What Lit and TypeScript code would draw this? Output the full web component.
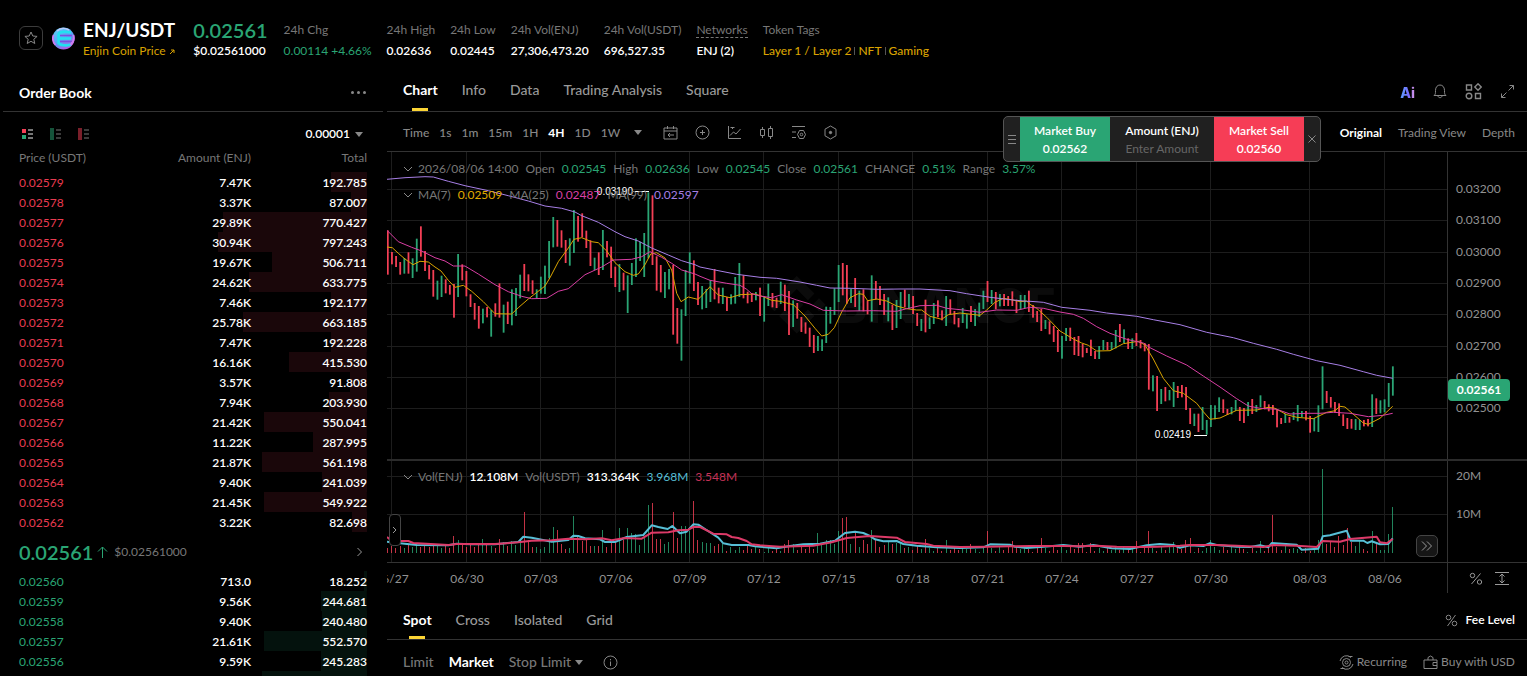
import { LitElement, html, css, svg } from "lit";
import { customElement, state } from "lit/decorators.js";
import { classMap } from "lit/directives/class-map.js";

/* ---------- market data ---------- */

interface Level { price: string; amount: string; total: number; }

const level = (row: string): Level => {
  const [price, amount, total] = row.split(" ");
  return { price, amount, total: Number(total) };
};

const ASKS = [
  "0.02579 7.47K 192.785", "0.02578 3.37K 87.007", "0.02577 29.89K 770.427", "0.02576 30.94K 797.243",
  "0.02575 19.67K 506.711", "0.02574 24.62K 633.775", "0.02573 7.46K 192.177", "0.02572 25.78K 663.185",
  "0.02571 7.47K 192.228", "0.02570 16.16K 415.530", "0.02569 3.57K 91.808", "0.02568 7.94K 203.930",
  "0.02567 21.42K 550.041", "0.02566 11.22K 287.995", "0.02565 21.87K 561.198", "0.02564 9.40K 241.039",
  "0.02563 21.45K 549.922", "0.02562 3.22K 82.698",
].map(level);

const BIDS = [
  "0.02560 713.0 18.252", "0.02559 9.56K 244.681", "0.02558 9.40K 240.480", "0.02557 21.61K 552.570",
  "0.02556 9.59K 245.283", "0.02555 21.98K 561.589",
].map(level);

const DEPTH_FULL = 1862;

/* Candle ranges, in thirds of a pixel below each block's base; r = down, g = up. */
const BLOCKS: [number, string][] = [
  [0, `r241-374 r306-343 r318-351 r336-374 g324-371 r307-371 g325-384 g266-365 r229-320 r303-363 r345-388 r360-440
   g392-449 g377-441 r388-430 r405-434 r402-503 g312-441 r343-391 r363-439 r433-471 r459-509 r468-536 g476-520
   r471-502 g480-560 r460-500 r400-503 g464-548 r455-522 g418-526 g414-498 g374-445 r342-423 r373-424 r391-432
   g418-446 g380-431 g347-432 g273-385 g201-292 r210-290 r241-293 r270-339 g265-347 g180-309 r198-275 r190-262
   r242-294 r271-348 g323-360 r307-375 g240-360 r273-322 r290-384 r350-411 g342-426 r368-421 g376-489 g339-405
   g265-381 g275-333 g249-381 g127-325 r136-345 r319-422 r345-427 g366-444 g357-418 r345-554 r474-581 g478-632
   g360-498 g307-401 r331-423 r396-465`],
  [240, `g168-238 g177-234 g151-216 r117-208 r173-220 g173-222 r201-243 g193-223 g141-221 g99-201 r136-205 r185-220
   r189-216 g186-211 r173-258 g199-275 g161-228 r189-232 r203-234 g155-222 r164-243 r183-315 g211-291 r219-266
   r261-306 r277-311 r293-351 r315-369 g318-363 g328-363 g230-339 g231-281 g175-255 g105-216 r99-196 r105-221
   g177-219 r144-231 g182-243 r178-244 r211-253 g136-275 r153-209 r168-225 r192-255 g202-274 r224-300 g210-294
   g186-267 r179-232 g192-237 r198-252 r249-288 g267-303 r209-307 g262-297 g219-282 r211-262 r241-271 g198-288
   r208-253 r243-283 r264-292 g234-279 g252-296 r228-276 g237-288 g218-261 g182-237 r153-216 g180-222 r186-238
   g192-229 r192-228 r198-228 r184-228 r209-249 g195-238 g195-234 r182-246`],
  [360, `r105-143 r123-156 r117-183 g150-177 r154-193 r168-216 r180-246 g198-266 g174-213 r173-213 r201-255 r198-258
   r222-262 r234-249 r209-258 r243-267 g228-267 g210-240 r216-240 g216-240 g180-235 r162-216 g178-219 r205-237
   g205-237 r189-228 r210-235 r219-244 r222-359 g316-364 r318-423 g357-402 r351-394 g360-391 g336-411 r348-384
   r345-382 r351-420 r414-462 g431-468 r431-486 g411-480 g450-494 g405-471 g406-448 g382-426 r388-429 r417-435
   g411-433 g390-423 r411-453 r414-459 g396-438 r387-432 g405-426 g376-412 r393-418 r403-424 r405-435 r417-472
   r444-462 g432-459 r441-458 g426-450 g405-454 g423-441 r423-451 r438-488 g444-484 g406-486 g289-418 r363-399
   r381-413 r396-427 r400-438 r433-468 r444-477 r447-476 g447-480 g450-480 r450-469 r447-469 g373-471 r385-432
   g391-430 g388-427 g339-411 g289-377`],
];

const STEP = 4.136;
const candles = BLOCKS.flatMap(([base, text]) =>
  text.trim().split(/\s+/).map((c) => {
    const [top, bottom] = c.slice(1).split("-").map((n) => (Number(n) + base) / 3 - 2);
    return { up: c[0] === "g", top, bottom };
  })
).map((c, i) => ({ ...c, x: 0.8 + i * STEP }));

/* Volume spikes by candle index, in thirds of a pixel; the rest is background trading. */
const SPIKES: Record<number, number> = {
  16: 50, 17: 40, 23: 42, 27: 41, 28: 34, 30: 36, 32: 43, 33: 122, 34: 40, 35: 18, 36: 17, 37: 12, 38: 18, 39: 44,
  40: 78, 41: 69, 42: 28, 43: 12, 44: 15, 45: 111, 46: 50, 47: 36, 48: 40, 49: 20, 50: 20, 51: 22, 52: 69, 53: 18,
  54: 30, 55: 33, 56: 74, 57: 40, 58: 76, 59: 60, 60: 58, 61: 24, 62: 45, 63: 145, 64: 149, 65: 42, 66: 42, 67: 26,
  68: 34, 69: 122, 70: 46, 71: 82, 72: 80, 73: 66, 74: 155, 75: 40, 76: 33, 77: 30, 78: 30, 79: 20, 80: 27, 81: 28,
  96: 28, 97: 38, 98: 26, 100: 28, 104: 59, 105: 28, 106: 38, 107: 38, 108: 28, 109: 67, 110: 105, 111: 109, 112: 27,
  113: 60, 114: 18, 115: 38, 116: 28, 117: 70, 118: 42, 119: 18, 120: 24, 121: 34, 122: 26, 123: 30, 124: 28, 125: 15,
  126: 17, 127: 8, 130: 42, 135: 39, 141: 26, 145: 65, 151: 35, 158: 44, 167: 29, 168: 29, 170: 30, 181: 36, 184: 66,
  190: 32, 193: 39, 194: 45, 199: 38, 211: 36, 214: 113, 219: 14, 225: 38, 226: 251, 227: 27, 228: 36, 229: 18,
  230: 51, 231: 24, 232: 75, 233: 33, 234: 22, 235: 35, 236: 12, 237: 6, 238: 66, 239: 30, 240: 8, 241: 9, 242: 57,
  243: 139,
};
const volumeOf = (i: number) =>
  (SPIKES[i] ?? (i < 32 ? 14 + ((i * 7) % 13) : 4 + ((i * 7) % 13) * 1.5)) / 3;

/* Line series: [x base, y base, points] in thirds of a pixel. */
type Series = [number, number, string][];
const line = (parts: Series, shift: number) =>
  parts.flatMap(([bx, by, pts]) =>
    pts.trim().split(/\s+/).map((p) => {
      const [x, y] = p.split(",").map(Number);
      return `${((x + bx) / 3 - 2).toFixed(1)},${((y + by) / 3 + shift).toFixed(1)}`;
    })
  ).join(" ");

const MA99 = line([
  [0, 0, "6,88 60,83 120,80 145,81 190,94 240,107 310,122 370,137 430,153 480,168 530,175 570,186 590,197 640,217 690,245 720,260 760,273 800,294 850,315 890,332 930,344"],
  [945, 240, "0,111 40,119 110,133 180,142 230,145 300,156 350,166 390,174 450,175 530,178 600,177 660,177 750,182 800,191 870,202 930,209 980,214"],
  [1935, 360, "0,94 40,97 95,112 180,121 230,129 320,139 370,149 450,164 530,187 610,203 670,220 740,238 790,253 860,272 930,286 1000,305 1040,316 1088,325"],
], -2);
const MA25 = line([
  [0, 0, "6,241 40,275 80,292 110,303 150,323 180,333 205,348 240,348 280,372 330,404 370,425 410,439 440,446 485,445 520,424 550,416 600,374 650,351 685,330 740,328 770,320 795,305 830,322 860,340 890,360 930,372"],
  [945, 240, "0,139 30,151 80,160 120,166 140,178 155,191 180,198 215,203 245,194 290,210 330,222 370,241 440,243 520,242 590,244 620,236 660,227 710,226 740,235 790,240 840,247 890,240 950,241 980,234"],
  [1935, 360, "0,112 40,115 90,126 130,133 160,145 200,170 240,190 290,208 340,219 360,233 410,258 470,285 520,318 570,351 620,386 655,408 690,415 740,418 780,432 830,430 870,430 910,427 960,430 1015,440 1060,436 1088,430"],
], -2);
const MA7 = line([
  [0, 0, "6,291 22,293 40,310 60,327 84,344 105,334 130,336 150,351 168,363 190,391 210,412 235,406 260,424 295,455 330,491 380,492 400,473 430,447 480,408 495,383 520,335 550,294 567,268 590,263 620,275 640,278 665,303 690,338 720,365 745,376 760,372 780,344 797,312 815,308 840,324 860,360 875,430 888,455 910,441 938,448"],
  [945, 240, "0,203 30,170 55,195 90,203 120,194 165,192 190,200 215,211 240,214 280,224 315,258 345,295 365,318 385,313 403,293 425,246 450,203 475,191 490,193 503,212 530,207 560,213 590,228 620,236 650,240 665,240 690,259 725,268 745,254 780,249 840,256 860,240 885,217 910,205 935,209 960,215 980,213"],
  [1935, 360, "0,103 20,115 50,142 90,183 130,207 155,219 175,226 200,243 240,242 280,221 325,214 345,225 370,267 400,325 430,362 460,370 500,400 520,425 540,448 570,444 620,421 680,420 715,412 735,415 770,434 800,442 850,446 890,427 915,422 930,409 945,411 975,437 1000,459 1015,463 1050,445 1088,409"],
], -2);
const VOL_FAST = line([
  [0, 0, "6,260 45,265 95,270 190,271 215,266 260,268 330,268 400,261 415,245 440,248 470,254 500,260 550,255 565,242 580,243 600,250 645,253 660,261 690,261 725,246 775,240 800,211 820,216 848,222 862,213 885,235 905,230 925,208 940,209 960,222 1000,248 1015,265 1040,270 1090,270 1110,274"],
  [1125, 15, "0,260 50,265 90,258 130,253 180,251 225,242 255,219 285,215 310,219 330,228 345,238 370,244 410,243 430,252 470,257 530,262 600,264 670,262 690,253 750,254 765,260 800,264"],
  [1935, 0, "0,278 60,274 100,270 150,275 190,270 245,280 300,282 350,271 390,267 430,270 450,278 480,271 520,273 540,265 560,270 620,275 660,276 690,271 715,277 725,264 800,269 815,284 865,281 878,244 900,241 950,227 962,257 1000,257 1012,264 1025,259 1050,268 1075,267 1088,250"],
], 303);
const VOL_SLOW = line([
  [0, 0, "6,246 20,258 70,258 85,264 150,268 190,270 215,267 330,267 400,262 440,257 500,256 550,251 600,253 650,250 680,256 720,249 770,251 800,233 850,232 880,226 910,224 925,216 945,216 985,236 1025,238 1040,246 1060,249 1085,258 1100,268"],
  [1125, 15, "0,256 60,260 160,257 215,247 260,234 330,228 410,233 435,246 500,252 520,257 600,261 680,260 750,259"],
  [1935, 0, "0,273 100,273 150,274 200,272 260,275 340,276 380,275 450,272 480,270 560,270 620,272 700,276 730,270 800,272 860,276 878,258 930,260 960,252 1040,245 1050,262 1070,265 1088,252"],
], 303);

const DAYS: [number, string][] = [
  [4, "06/27"], [79, "06/30"], [153, "07/03"], [228, "07/06"], [302, "07/09"], [376, "07/12"], [451, "07/15"],
  [525, "07/18"], [600, "07/21"], [674, "07/24"], [749, "07/27"], [823, "07/30"], [922, "08/03"], [997, "08/06"],
];
const PRICES = ["0.03200", "0.03100", "0.03000", "0.02900", "0.02800", "0.02700", "0.02600", "0.02500"];
const priceY = (k: number) => Math.round(37 + k * 31.3);

/* ---------- chart ---------- */

@customElement("price-chart")
class PriceChart extends LitElement {
  static styles = css`
    :host { display: block; position: relative; overflow: hidden; }
    .plot { display: block; width: 100%; height: 442px; }
    .anchor { overflow: visible; }
    .grid { stroke: #1d1d1d; stroke-width: 1; }
    .frame { stroke: #333; stroke-width: 1; }
    .tick { fill: #929292; font: 400 12px Lato, sans-serif; }
    .tick.day { text-anchor: middle; }
    .up { fill: #2aa574; }
    .down { fill: #f43f55; }
    .vol { opacity: 0.8; }
    .curve { fill: none; stroke-linejoin: round; }
    .ma7 { stroke: #d9a400; }
    .ma25 { stroke: #d93fa4; }
    .ma99 { stroke: #a77fe6; }
    .fast { stroke: #57bfd6; stroke-width: 2; }
    .slow { stroke: #dc3a68; stroke-width: 2; }
    .mark { fill: #fff; font: 400 10px "Liberation Sans", sans-serif; text-anchor: end; }
    .leader { stroke: #fff; }
    .badge { fill: #2aa574; }
    .last { fill: #fff; font: 700 12px Lato, sans-serif; text-anchor: middle; }
    .watermark { fill: #fff; opacity: 0.045; }
    .brand { font: 800 48px Inter, sans-serif; }
    .legend {
      position: absolute; left: 16px; display: flex; align-items: center; gap: 7px;
      font-size: 12px; line-height: 16px; color: #777; white-space: nowrap;
    }
    .ohlc { top: 9px; }
    .averages { top: 35px; }
    .volumes { top: 317px; }
    .lead { display: flex; align-items: center; gap: 5px; }
    .chev { width: 10px; height: 10px; fill: none; stroke: #888; }
    .green { color: #2aa574; }
    .gold { color: #e0aa00; }
    .pink { color: #d93fa4; }
    .violet { color: #a77fe6; }
    .white { color: #fff; font-weight: 600; }
    .cyan { color: #57bfd6; }
    .rose { color: #c73257; }
    button { padding: 0; margin: 0; cursor: pointer; display: grid; place-items: center; }
    button svg { fill: none; stroke: #999; }
    .fold { position: absolute; left: 2px; top: 362px; width: 12px; height: 32px; background: #000; border: 1px solid #444; border-radius: 4px; }
    .jump { position: absolute; right: 89px; top: 383px; width: 22px; height: 22px; background: #161616; border: 1px solid #444; border-radius: 5px; }
  `;

  private chev = html`<svg class="chev" viewBox="0 0 10 10"><path d="M1 3l4 4 4-4" /></svg>`;

  render() {
    return html`
      <svg class="plot" role="img" aria-label="ENJ/USDT 4H chart">
        ${PRICES.map((_, k) => svg`<line class="grid" x1="0" x2="100%" y1=${priceY(k) + 0.5} y2=${priceY(k) + 0.5} />`)}
        <line class="grid" x1="0" x2="100%" y1="324.5" y2="324.5" />
        <line class="grid" x1="0" x2="100%" y1="362.5" y2="362.5" />
        <svg class="anchor" x="100%">
          <g transform="translate(-1140 0)">
            ${DAYS.map(([x]) => svg`<line class="grid" x1=${x + 0.5} x2=${x + 0.5} y1="0" y2="410" />`)}
            <g class="watermark">
              <path transform="translate(381 124) scale(2.4)" d="M16.624 13.92l2.718 2.716-7.353 7.353-7.353-7.353 2.717-2.716 4.636 4.66zM21.26 9.284L24 12l-2.715 2.716L18.568 12zM11.989 9.285l2.716 2.691-2.716 2.717L9.272 12zM2.716 9.284L5.409 12l-2.692 2.692L0 12zM11.989.011l7.353 7.33-2.718 2.715-4.635-4.636-4.636 4.66-2.717-2.716z" />
              <text class="brand" x="448" y="171">BINANCE</text>
            </g>
            <rect x="1060" y="0" width="80" height="442" fill="#000" />
            <g class="vol" shape-rendering="crispEdges">
              ${candles.map((c, i) => svg`<rect class=${c.up ? "up" : "down"} x=${c.x - 0.6} y=${401 - volumeOf(i)} width="1" height=${volumeOf(i)} />`)}
            </g>
            <polyline class="curve fast" points=${VOL_FAST} />
            <polyline class="curve slow" points=${VOL_SLOW} />
            ${candles.map((c) => svg`<rect class=${c.up ? "up" : "down"} x=${c.x - 0.9} y=${c.top} width="1.8" height=${c.bottom - c.top} />`)}
            <polyline class="curve ma7" points=${MA7} />
            <polyline class="curve ma25" points=${MA25} />
            <polyline class="curve ma99" points=${MA99} />
            <text class="mark" x="246" y="43">0.03190</text>
            <line class="leader" x1="248" x2="262" y1="39.5" y2="39.5" />
            <text class="mark" x="804" y="286">0.02419</text>
            <line class="leader" x1="807" x2="820" y1="283.5" y2="283.5" />
            <line class="frame" x1="1060.5" x2="1060.5" y1="0" y2="441" />
            ${PRICES.map((p, k) => svg`<text class="tick" x="1069" y=${priceY(k) + 4}>${p}</text>`)}
            <text class="tick" x="1069" y="328">20M</text>
            <text class="tick" x="1069" y="366">10M</text>
            <rect class="badge" x="1061" y="227" width="62" height="22" rx="4" />
            <text class="last" x="1092" y="242">0.02561</text>
            ${DAYS.map(([x, day]) => svg`<text class="tick day" x=${x + 1} y="431">${day}</text>`)}
            <g fill="none" stroke="#999">
              <circle cx="1085.500" cy="423.500" r="2.200" /><circle cx="1092.500" cy="430" r="2.200" /><path d="M1093.500 421.500l-9 10.500" />
              <path d="M1108 420.500h14M1108 432.500h14M1115 422.500v8M1112.500 424.500l2.500-2.500 2.500 2.500M1112.500 428.500l2.500 2.500 2.500-2.500" />
            </g>
          </g>
        </svg>
        <rect x="0" y="307" width="100%" height="2" fill="#2b2b2b" />
        <line class="frame" x1="0" x2="100%" y1="410.5" y2="410.5" />
      </svg>
      <div class="legend ohlc">
        <span class="lead">${this.chev}2026/08/06 14:00</span>
        <span>Open</span><span class="green">0.02545</span><span>High</span><span class="green">0.02636</span>
        <span>Low</span><span class="green">0.02545</span><span>Close</span><span class="green">0.02561</span>
        <span>CHANGE</span><span class="green">0.51%</span><span>Range</span><span class="green">3.57%</span>
      </div>
      <div class="legend averages">
        <span class="lead">${this.chev}MA(7)</span><span class="gold">0.02509</span><span>MA(25)</span>
        <span class="pink">0.02487</span><span>MA(99)</span><span class="violet">0.02597</span>
      </div>
      <div class="legend volumes">
        <span class="lead">${this.chev}Vol(ENJ)</span><span class="white">12.108M</span><span>Vol(USDT)</span>
        <span class="white">313.364K</span><span class="cyan">3.968M</span><span class="rose">3.548M</span>
      </div>
      <button class="fold" aria-label="Show drawing tools"><svg width="6" height="8"><path d="M1 1l3 3-3 3" /></svg></button>
      <button class="jump" aria-label="Scroll to latest"><svg width="12" height="10"><path d="M1 0.500l4.500 4.500-4.500 4.500M6 0.500l4.500 4.500-4.500 4.500" /></svg></button>
    `;
  }
}

/* ---------- order book ---------- */

@customElement("order-book")
class OrderBook extends LitElement {
  static styles = css`
    :host { display: block; font-size: 12px; }
    button { font: inherit; color: inherit; background: none; border: 0; padding: 0; cursor: pointer; }
    .title { display: flex; align-items: center; justify-content: space-between; height: 37px; padding: 0 16px; border-bottom: 1px solid #333; }
    h2 { margin: 0; font-size: 14px; font-weight: 700; }
    .dots { display: flex; gap: 3px; padding: 0 1px; }
    .dots i { width: 3px; height: 3px; border-radius: 50%; background: #888; }
    .modes { display: flex; align-items: center; justify-content: space-between; box-sizing: border-box; height: 36px; padding: 8px 20px 0 18px; }
    .set { display: flex; gap: 16px; }
    .set svg { display: block; }
    .dim { opacity: 0.5; }
    .tick { display: flex; align-items: center; gap: 5px; font-weight: 600; }
    .body { padding: 0 16px; }
    table { width: 100%; border-collapse: collapse; table-layout: fixed; }
    th { font-weight: 400; color: #777; height: 20px; padding: 0 0 4px; }
    td { height: 20px; padding: 2px 0 0; box-sizing: border-box; font-weight: 600; line-height: 16px; }
    th, td { text-align: right; }
    th:first-child, td:first-child { text-align: left; font-weight: 400; }
    tr.ask, tr.bid { background-position: right; background-repeat: no-repeat; }
    .ask { background-image: linear-gradient(#1a070a, #1a070a); }
    .bid { background-image: linear-gradient(#04120d, #04120d); }
    .ask td:first-child { color: #ea3b50; }
    .bid td:first-child, .now { color: #2aa574; }
    .mid { display: flex; align-items: center; height: 39px; padding: 0 4px 0 0; }
    .now { display: flex; align-items: center; gap: 4px; font-size: 20px; font-weight: 600; margin-right: 6px; }
    .usd { color: #777; flex: 1; }
    .mid svg { fill: none; }
  `;

  private rows(side: string, levels: Level[]) {
    return levels.map((l) => html`
      <tr class=${side} style="background-size: ${(l.total / DEPTH_FULL) * 100}% 100%">
        <td>${l.price}</td><td>${l.amount}</td><td>${l.total.toFixed(3)}</td>
      </tr>`);
  }

  private mode(top: string, bottom: string, dim: boolean, label: string) {
    return html`<button class=${classMap({ dim })} aria-label=${label}>
      <svg width="12" height="12">
        <path fill=${top} d="M1 1h4v4H1z" /><path fill=${bottom} d="M1 7h4v4H1z" />
        ${dim ? svg`<path fill=${top} d="M1 0h4v12H1z" />` : ""}
        <path fill="#777" d="M7 1h5v2H7zM7 5h5v2H7zM7 9h5v2H7z" />
      </svg></button>`;
  }

  render() {
    return html`
      <div class="title"><h2>Order Book</h2><button class="dots" aria-label="More"><i></i><i></i><i></i></button></div>
      <div class="modes">
        <div class="set">
          ${this.mode("#f43f55", "#2aa574", false, "Bids and asks")}
          ${this.mode("#2aa574", "#2aa574", true, "Bids")}
          ${this.mode("#f43f55", "#f43f55", true, "Asks")}
        </div>
        <button class="tick">0.00001 <svg width="8" height="5"><path fill="#888" d="M0 0h8L4 5z" /></svg></button>
      </div>
      <div class="body">
        <table>
          <thead><tr><th>Price (USDT)</th><th>Amount (ENJ)</th><th>Total</th></tr></thead>
          <tbody>${this.rows("ask", ASKS)}</tbody>
        </table>
        <div class="mid">
          <span class="now">0.02561 <svg width="11" height="12" stroke="#2aa574"><path d="M5.500 12V1M1 5.500L5.500 1 10 5.500" /></svg></span>
          <span class="usd">$0.02561000</span>
          <svg width="7" height="10" stroke="#999"><path d="M1.500 1l4 4-4 4" /></svg>
        </div>
        <table><tbody>${this.rows("bid", BIDS)}</tbody></table>
      </div>`;
  }
}

/* ---------- page ---------- */

const TOOLS: [string, unknown][] = [
  ["Go to date", svg`<path d="M1 3h13v11H1zM1 6h13M4.500 1v3M10.500 1v3M11 10H5M7 8l-2 2 2 2" />`],
  ["Compare", svg`<circle cx="7.500" cy="7.500" r="6.500" /><path d="M7.500 5v5M5 7.500h5" />`],
  ["Indicators", svg`<path d="M1.500 1v12.500H14M3 10.500l3.500-3.500 2.500 2L13.500 4M3.500 2.500h4M5.500 2.500v1.500" />`],
  ["Candle style", svg`<path d="M3.500 2v2.500M3.500 10.500V13M11.500 1v2.500M11.500 11.500V14M1.500 4.500h4v6h-4zM9.500 3.500h4v8h-4z" />`],
  ["Display settings", svg`<path d="M1 1.500h13M1 7h4M1 12.500h4M8.500 5.500h4l2 4-2 4h-4l-2-4z" /><circle cx="10.500" cy="9.500" r="1.300" />`],
  ["Chart settings", svg`<path d="M7.500 1l5.500 3.200v6.600L7.500 14 2 10.800V4.200z" /><circle cx="7.500" cy="7.500" r="1.200" fill="#888" />`],
];

@customElement("app-root")
class AppRoot extends LitElement {
  @state() private interval = "4H";
  @state() private tab = "Chart";
  @state() private mode = "Spot";

  static styles = css`
    :host {
      display: flex; flex-direction: column; height: 100vh; overflow: hidden;
      background: #000; color: #fff; font: 400 12px/16px Lato, sans-serif;
    }
    a { color: inherit; text-decoration: none; }
    button { font: inherit; color: inherit; background: none; border: 0; padding: 0; cursor: pointer; white-space: nowrap; }
    svg { display: block; }
    .icon { fill: none; stroke: #888; }

    .ticker { display: flex; align-items: center; height: 74px; padding: 6px 16px 0 19px; box-sizing: border-box; white-space: nowrap; flex: none; }
    .star { display: grid; place-items: center; width: 24px; height: 24px; border: 1px solid #3c3c3c; border-radius: 6px; box-sizing: border-box; margin: 0 9px 4px 0; }
    .coin { margin: 0 8px 4px 0; }
    .two { display: flex; flex-direction: column; align-self: flex-start; padding-top: 16px; }
    .two > * { height: 20px; line-height: 16px; }
    .two > :last-child { padding-top: 1px; }
    .pair { margin-right: 18px; }
    .quote { margin-right: 16px; }
    h1 { margin: 0; font-size: 19px; font-weight: 700; }
    .big { font-size: 20px; font-weight: 600; color: #2aa574; }
    .link { color: #d9a200; }
    .link svg { display: inline-block; fill: none; stroke: #d9a200; }
    .usd { font-weight: 600; }
    .stats { display: flex; gap: 15px; align-self: flex-start; }
    .label { color: #777; }
    .label span { border-bottom: 1px dashed #777; }
    .value { font-weight: 600; }
    .value.green { color: #2aa574; font-weight: 400; }
    .value.tags { color: #d9a200; font-weight: 500; }
    .tags i { display: inline-block; width: 1px; height: 8px; background: #555; margin: 0 3px; }

    .columns { display: flex; gap: 4px; padding-left: 3px; flex: 1; min-height: 0; }
    order-book { width: 380px; flex: none; }
    .main { flex: 1; min-width: 0; position: relative; }
    .bar { display: flex; align-items: center; padding: 0 12px 0 16px; border-bottom: 1px solid #333; box-sizing: border-box; }
    .tabs { display: flex; align-self: stretch; gap: 24px; font-size: 14px; font-weight: 500; color: #999; flex: 1; }
    .tabs button { position: relative; padding-bottom: 5px; }
    .tabs .on { color: #fff; font-weight: 700; }
    .tabs .on::after { content: ""; position: absolute; left: 50%; bottom: 0; width: 16px; height: 3px; margin-left: -8px; background: #fcd535; }
    .top { height: 38px; }
    .actions { display: flex; gap: 18px; align-items: center; padding-bottom: 2px; }
    .ai { padding-top: 3px; font: 800 14px/16px Inter, sans-serif; color: transparent; background: linear-gradient(90deg, #5aa2ff, #7b6cff 60%, #e59be0); background-clip: text; -webkit-background-clip: text; }
    .bar.tools { height: 40px; padding-top: 2px; color: #888; }
    .times { display: flex; gap: 10px; font-weight: 500; }
    .times .on, .views .on { color: #fff; font-weight: 700; }
    .caret { margin: 0 21px 0 14px; }
    .icons { display: flex; gap: 17px; flex: 1; }
    .views { display: flex; gap: 16px; }

    .quick {
      position: absolute; top: 42px; right: 206px; display: flex; width: 318px; height: 46px; box-sizing: border-box;
      border: 1px solid #555; border-radius: 5px; background: #202020; overflow: hidden; line-height: 18px;
    }
    .quick > * { display: flex; flex-direction: column; justify-content: center; align-items: center; }
    .grip, .close { width: 16px; flex: none; }
    .quick .deal { width: 90px; padding-top: 2px; font-weight: 600; }
    .deal.buy { background: #2aa574; }
    .deal.sell { background: #f63d56; }
    .amount { flex: 1; font-weight: 600; padding-top: 1px; }
    .amount input { width: 80px; height: 18px; padding: 0; border: 0; background: none; font: 400 12px/16px Lato, sans-serif; color: #fff; text-align: center; outline: 0; }
    .amount input::placeholder { color: #666; opacity: 1; }

    .bar.modes { height: 46px; padding-top: 12px; }
    .fee { display: flex; align-items: center; gap: 8px; font-weight: 600; margin-bottom: 5px; }
    .types { display: flex; align-items: center; gap: 15px; height: 44px; padding: 0 12px 0 16px; box-sizing: border-box; font-size: 14px; font-weight: 500; color: #777; }
    .types .on { color: #fff; font-weight: 700; }
    .stop { display: flex; align-items: center; gap: 4px; }
    .info { margin-left: 5px; }
    .right { display: flex; gap: 16px; margin-left: auto; font-size: 12px; font-weight: 400; color: #888; }
    .right a { display: flex; align-items: center; gap: 3px; }
  `;

  private stat(label: unknown, value: unknown, kind = "") {
    return html`<div class="two"><div class="label">${label}</div><div class="value ${kind}">${value}</div></div>`;
  }

  private pick(items: string[], current: string, set: (v: string) => void) {
    return items.map((t) => html`<button class=${classMap({ on: t === current })} @click=${() => set(t)}>${t}</button>`);
  }

  private percent = html`<svg class="icon" width="13" height="13"><circle cx="3.500" cy="3.500" r="2.300" /><circle cx="9.500" cy="9.500" r="2.300" /><path d="M10.500 1L2.500 12" /></svg>`;

  render() {
    return html`
      <header class="ticker">
        <button class="star" aria-label="Favorite">
          <svg class="icon" width="14" height="14"><path d="M7 1l1.800 4 4.300.4-3.300 2.900 1 4.200L7 10.300l-3.800 2.200 1-4.200L.9 5.400l4.300-.4z" /></svg>
        </button>
        <svg class="coin" width="23" height="23" viewBox="0 0 23 23">
          <defs><linearGradient id="enj" x1="0.200" y1="0" x2="0.800" y2="1"><stop offset="0" stop-color="#5fd0f5" /><stop offset="0.550" stop-color="#5a9cf5" /><stop offset="1" stop-color="#d14be0" /></linearGradient></defs>
          <circle cx="11.500" cy="11.500" r="11" fill="url(#enj)" />
          <path d="M19 5.500C14 4.500 8 4.500 6.500 7v9c1.500 2.500 8 3 12.500 1.500" fill="none" stroke="#22e0f0" stroke-width="2.600" />
          <path d="M7 11.500h12" stroke="#22e0f0" stroke-width="2.600" />
          <path d="M8 8.500h12M8 14.500h12" stroke="#7a4fe0" stroke-width="1.500" />
          <path d="M1.500 8a10 10 0 0 0 2 10M21.500 8a10 10 0 0 1-3 10" fill="none" stroke="#cf7cf0" stroke-width="1.800" />
          <path d="M5 4a10 10 0 0 1 12-1" fill="none" stroke="#b9c8fa" stroke-width="1.500" />
        </svg>
        <div class="two pair">
          <h1>ENJ/USDT</h1>
          <a class="link" href="#price">Enjin Coin Price <svg width="6" height="6"><path d="M1 5l4-4M2 1h3v3" /></svg></a>
        </div>
        <div class="two quote"><div class="big">0.02561</div><div class="usd">$0.02561000</div></div>
        <div class="stats">
          ${this.stat("24h Chg", "0.00114 +4.66%", "green")}
          ${this.stat("24h High", "0.02636")}
          ${this.stat("24h Low", "0.02445")}
          ${this.stat("24h Vol(ENJ)", "27,306,473.20")}
          ${this.stat("24h Vol(USDT)", "696,527.35")}
          ${this.stat(html`<span>Networks</span>`, "ENJ (2)")}
          ${this.stat("Token Tags", html`<a href="#layer">Layer 1 / Layer 2</a><i></i><a href="#nft">NFT</a><i></i><a href="#gaming">Gaming</a>`, "tags")}
        </div>
      </header>
      <div class="columns">
        <order-book></order-book>
        <main class="main">
          <nav class="bar top">
            <div class="tabs">${this.pick(["Chart", "Info", "Data", "Trading Analysis", "Square"], this.tab, (v) => (this.tab = v))}</div>
            <div class="actions">
              <button class="ai">Ai</button>
              <button aria-label="Alerts"><svg class="icon" width="14" height="15"><path d="M1 11.500h12c-1.500-1.200-1.500-2-1.500-5C11.500 3 9.500 1 7 1S2.500 3 2.500 6.500c0 3 0 3.800-1.500 5zM5 12c.3 2.200 3.700 2.200 4 0" /></svg></button>
              <button aria-label="Layout"><svg class="icon" width="17" height="17" stroke-width="1.400"><path d="M1.500 2h5v5h-5zM10.500 10.500h5v5h-5zM13 .800L16.200 4 13 7.200 9.800 4z" /><circle cx="4" cy="13" r="2.800" /></svg></button>
              <button aria-label="Full screen"><svg class="icon" width="15" height="15"><path d="M9.500 1.500h4v4M13.500 1.500L8.500 6.500M5.500 13.500h-4v-4M1.500 13.500l5-5" /></svg></button>
            </div>
          </nav>
          <div class="bar tools">
            <div class="times">${this.pick(["Time", "1s", "1m", "15m", "1H", "4H", "1D", "1W"], this.interval, (v) => (this.interval = v))}</div>
            <button class="caret" aria-label="More intervals"><svg width="8" height="5"><path fill="#888" d="M0 0h8L4 5z" /></svg></button>
            <div class="icons">${TOOLS.map(([name, art]) => html`<button aria-label=${name}><svg class="icon" width="15" height="15">${art}</svg></button>`)}</div>
            <div class="views"><button class="on">Original</button><button>Trading View</button><button>Depth</button></div>
          </div>
          <price-chart></price-chart>
          <div class="quick">
            <span class="grip"><svg class="icon" width="8" height="9"><path d="M0 .500h8M0 4.500h8M0 8.500h8" /></svg></span>
            <button class="deal buy"><span>Market Buy</span><span>0.02562</span></button>
            <label class="amount"><span>Amount (ENJ)</span><input placeholder="Enter Amount" /></label>
            <button class="deal sell"><span>Market Sell</span><span>0.02560</span></button>
            <button class="close" aria-label="Close"><svg class="icon" width="8" height="8"><path d="M.500.500l7 7M7.500.500l-7 7" /></svg></button>
          </div>
          <nav class="bar modes">
            <div class="tabs">${this.pick(["Spot", "Cross", "Isolated", "Grid"], this.mode, (v) => (this.mode = v))}</div>
            <a class="fee" href="#fees">${this.percent}Fee Level</a>
          </nav>
          <div class="types">
            <button>Limit</button><button class="on">Market</button>
            <button class="stop">Stop Limit <svg width="8" height="5"><path fill="#888" d="M0 0h8L4 5z" /></svg></button>
            <button class="info" aria-label="Order types"><svg class="icon" width="15" height="15"><circle cx="7.500" cy="7.500" r="6.500" /><path d="M7.500 6.500v4.500M7.500 4v1.300" /></svg></button>
            <div class="right">
              <a href="#recurring"><svg class="icon" width="15" height="15"><circle cx="7.500" cy="7.500" r="4" /><circle cx="7.500" cy="7.500" r="1.500" /><path d="M1 6a6.600 6.600 0 0 1 11-3.500M14 9a6.600 6.600 0 0 1-11 3.500M9.500 1.500h4M1.500 13.500h4" /></svg>Recurring</a>
              <a href="#buy"><svg class="icon" width="15" height="15"><path d="M1 5h13v8.500H1zM14 7.500h-4v3h4M5 5V2.500L7.500 1 10 2.500V5" /></svg>Buy with USD</a>
            </div>
          </div>
        </main>
      </div>`;
  }
}
